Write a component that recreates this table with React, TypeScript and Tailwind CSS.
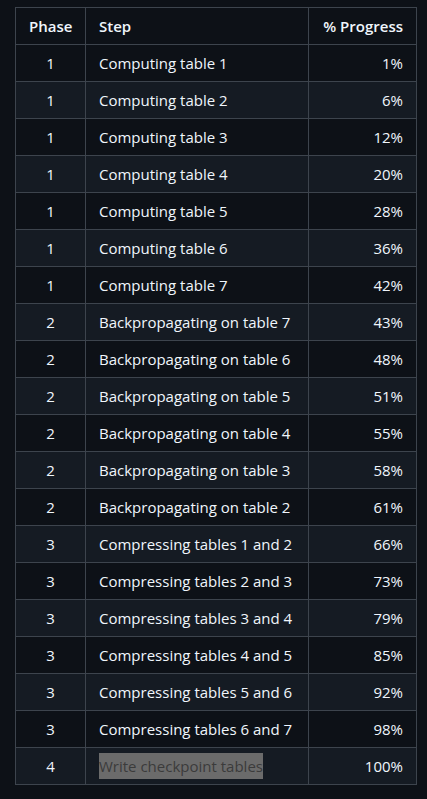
import React from 'react';

type Row = { phase: number; step: string; progress: string };

const rows: Row[] = [
  { phase: 1, step: 'Computing table 1', progress: '1%' },
  { phase: 1, step: 'Computing table 2', progress: '6%' },
  { phase: 1, step: 'Computing table 3', progress: '12%' },
  { phase: 1, step: 'Computing table 4', progress: '20%' },
  { phase: 1, step: 'Computing table 5', progress: '28%' },
  { phase: 1, step: 'Computing table 6', progress: '36%' },
  { phase: 1, step: 'Computing table 7', progress: '42%' },
  { phase: 2, step: 'Backpropagating on table 7', progress: '43%' },
  { phase: 2, step: 'Backpropagating on table 6', progress: '48%' },
  { phase: 2, step: 'Backpropagating on table 5', progress: '51%' },
  { phase: 2, step: 'Backpropagating on table 4', progress: '55%' },
  { phase: 2, step: 'Backpropagating on table 3', progress: '58%' },
  { phase: 2, step: 'Backpropagating on table 2', progress: '61%' },
  { phase: 3, step: 'Compressing tables 1 and 2', progress: '66%' },
  { phase: 3, step: 'Compressing tables 2 and 3', progress: '73%' },
  { phase: 3, step: 'Compressing tables 3 and 4', progress: '79%' },
  { phase: 3, step: 'Compressing tables 4 and 5', progress: '85%' },
  { phase: 3, step: 'Compressing tables 5 and 6', progress: '92%' },
  { phase: 3, step: 'Compressing tables 6 and 7', progress: '98%' },
  { phase: 4, step: 'Write checkpoint tables', progress: '100%' },
];

const cell = 'border border-[#3d444d] px-[13px] py-[6px] h-[37px] whitespace-nowrap';

const App: React.FC = () => {
  return (
    <div className="min-h-screen bg-[#0d1117] text-[#f0f6fc] text-[15px] leading-6 font-['Open_Sans',sans-serif] pt-[7px] pl-[15px]">
      <table className="border-collapse table-fixed w-[401px]">
        <colgroup>
          <col className="w-[70px]" />
          <col className="w-[223px]" />
          <col className="w-[108px]" />
        </colgroup>
        <thead>
          <tr className="bg-[#0d1117]">
            <th className={`${cell} text-center font-semibold`}>Phase</th>
            <th className={`${cell} text-left font-semibold`}>Step</th>
            <th className={`${cell} text-right font-semibold`}>% Progress</th>
          </tr>
        </thead>
        <tbody>
          {rows.map((r, i) => (
            <tr key={i} className={i % 2 === 0 ? 'bg-[#0d1117]' : 'bg-[#151b23]'}>
              <td className={`${cell} text-center`}>{r.phase}</td>
              <td className={`${cell} text-left`}>
                {r.phase === 4 ? (
                  <span className="bg-[#6b6b6b] text-[#3b3b3b] py-[3px]">{r.step}</span>
                ) : (
                  r.step
                )}
              </td>
              <td className={`${cell} text-right`}>{r.progress}</td>
            </tr>
          ))}
        </tbody>
      </table>
    </div>
  );
};

export default App;
